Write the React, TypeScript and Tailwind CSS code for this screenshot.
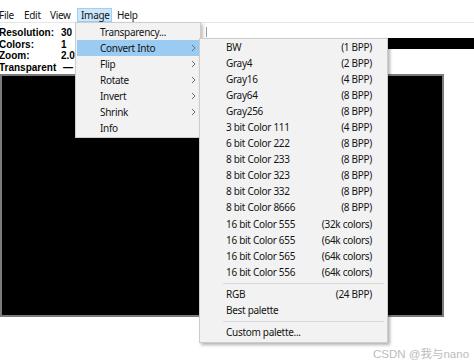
import React from 'react';

const imageItems = [
  { label: 'Transparency...' },
  { label: 'Convert Into', sub: true, active: true },
  { label: 'Flip', sub: true },
  { label: 'Rotate', sub: true },
  { label: 'Invert', sub: true },
  { label: 'Shrink', sub: true },
  { label: 'Info' },
];

type Conv = { label: string; info?: string } | 'sep';

const convertItems: Conv[] = [
  { label: 'BW', info: '(1 BPP)' },
  { label: 'Gray4', info: '(2 BPP)' },
  { label: 'Gray16', info: '(4 BPP)' },
  { label: 'Gray64', info: '(8 BPP)' },
  { label: 'Gray256', info: '(8 BPP)' },
  { label: '3 bit Color 111', info: '(4 BPP)' },
  { label: '6 bit Color 222', info: '(8 BPP)' },
  { label: '8 bit Color 233', info: '(8 BPP)' },
  { label: '8 bit Color 323', info: '(8 BPP)' },
  { label: '8 bit Color 332', info: '(8 BPP)' },
  { label: '8 bit Color 8666', info: '(8 BPP)' },
  { label: '16 bit Color 555', info: '(32k colors)' },
  { label: '16 bit Color 655', info: '(64k colors)' },
  { label: '16 bit Color 565', info: '(64k colors)' },
  { label: '16 bit Color 556', info: '(64k colors)' },
  'sep',
  { label: 'RGB', info: '(24 BPP)' },
  { label: 'Best palette' },
  'sep',
  { label: 'Custom palette...' },
];

const Chevron = () => (
  <svg width="5" height="8" viewBox="0 0 5 8" className="shrink-0">
    <path d="M1 1l3 3-3 3" fill="none" stroke="#6b6b6b" strokeWidth="1" />
  </svg>
);

const App = () => {
  return (
    <div className="relative w-[474px] h-[364px] overflow-hidden bg-white text-[#141414] font-['Noto_Sans',sans-serif] tracking-[-0.3px]">
      <div className="h-[8px]" />

      {/* menu bar */}
      <div className="flex h-[15px] items-center border-b border-[#e6e6e6] text-[10px] leading-none">
        <span className="-ml-[1px] w-[25px]">File</span>
        <span className="w-[26px]">Edit</span>
        <span className="w-[27px]">View</span>
        <span className="flex h-[14px] w-[35px] items-center border border-[#9fd0f5] bg-[#cce6fb] pl-[3px]">Image</span>
        <span className="ml-[5px]">Help</span>
      </div>

      {/* info panel */}
      <div className="flex h-[51px] font-['Liberation_Sans',sans-serif] text-[10px] font-bold leading-[11.5px] tracking-normal text-black">
        <div className="-ml-[1px] w-[62px] pt-[4px]">
          <div>Resolution:</div>
          <div>Colors:</div>
          <div>Zoom:</div>
          <div>Transparent</div>
        </div>
        <div className="w-[14px] pt-[4px]">
          <div>30</div>
          <div>1</div>
          <div>2.0</div>
          <div className="pl-[2px]">—</div>
        </div>
        <div className="flex-1 pt-[4px]">
          <div className="h-[11px] pl-[131px]">
            <div className="h-[10px] w-px bg-[#9a9a9a]" />
          </div>
          <div className="h-[11px] bg-black" />
        </div>
      </div>

      {/* canvas */}
      <div className="h-[243px] w-[444px] border-2 border-[#7b7b7b] bg-black" />

      {/* Image menu */}
      <div className="absolute left-[75px] top-[22px] w-[126px] border border-[#cdcdcd] bg-[#f2f2f2] py-[1px] text-[10px] shadow-[2px_2px_3px_rgba(0,0,0,0.25)]">
        {imageItems.map((it) => (
          <div
            key={it.label}
            className={
              it.active
                ? 'ml-[1px] flex h-[16px] items-center justify-between bg-[#99cbf3] pl-[23px] pr-[4px]'
                : 'ml-[1px] flex h-[16px] items-center justify-between pl-[23px] pr-[4px]'
            }
          >
            <span>{it.label}</span>
            {it.sub && <Chevron />}
          </div>
        ))}
      </div>

      {/* Convert Into submenu */}
      <div className="absolute left-[199px] top-[38px] w-[189px] border border-[#cdcdcd] bg-[#f2f2f2] pb-[1px] text-[10px] shadow-[2px_2px_3px_rgba(0,0,0,0.3)]">
        {convertItems.map((it, i) =>
          it === 'sep' ? (
            <div key={i} className="flex h-[6px] items-center pl-[23px] pr-[3px]">
              <div className="h-px w-full bg-[#d9d9d9]" />
            </div>
          ) : (
            <div key={i} className="flex h-[16.1px] items-center justify-between pl-[26px] pr-[15px]">
              <span>{it.label}</span>
              {it.info && <span>{it.info}</span>}
            </div>
          ),
        )}
      </div>

      <div className="absolute left-[373px] top-[346px] font-['Liberation_Sans','Noto_Sans_CJK_SC',sans-serif] text-[11.5px] tracking-normal text-[#bcbcbc]">
        CSDN @我与nano
      </div>
    </div>
  );
};

export default App;
